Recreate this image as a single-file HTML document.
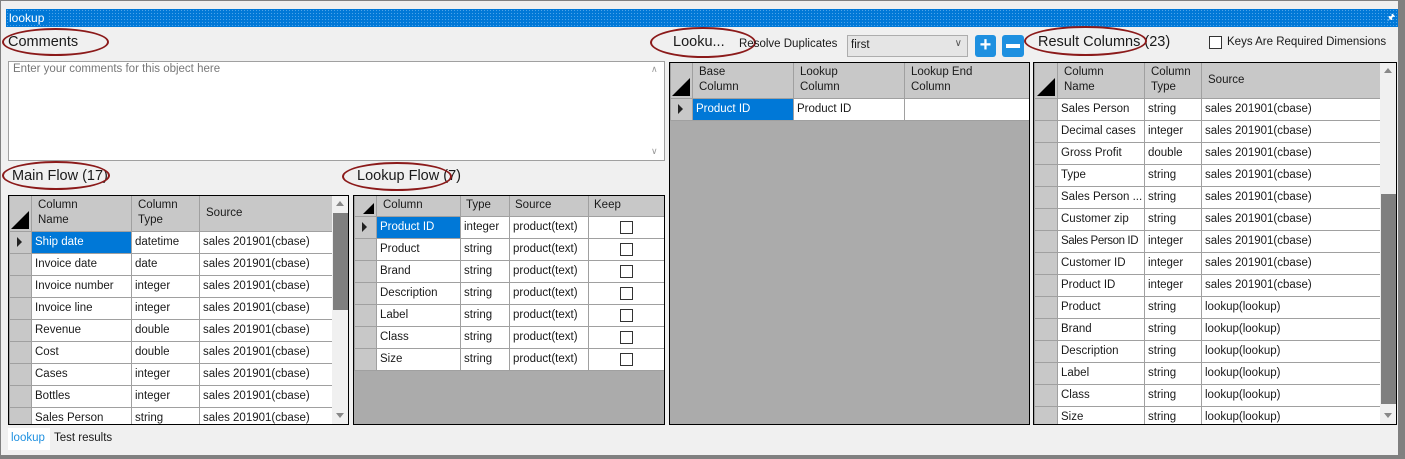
<!DOCTYPE html>
<html><head><meta charset="utf-8"><style>
*{box-sizing:border-box;margin:0;padding:0}
body{width:1405px;height:459px;background:#f0f0f0;font-family:"Liberation Sans",sans-serif;font-size:11.5px;color:#1a1a1a;position:relative;overflow:hidden}
.a{position:absolute}
.outer{left:0;top:0;width:1405px;height:459px;border:1px solid #808080;border-right:7px solid #808080;border-bottom:4px solid #808080}
.title{left:6px;top:9px;width:1392px;height:18px;background:#0078d7;color:#fff;font-size:12px;line-height:18px;padding-left:3px;background-image:radial-gradient(#4da3e8 0.6px,transparent 0.8px);background-size:3px 3px}
.title span{background:#0078d7;padding-right:4px}
.lbl{font-size:14.5px;color:#1a1a1a}
.ell{border:2px solid #8b1a1a;border-radius:50%}
.grid{border:1px solid #000;background:#ababab;overflow:hidden}
table{border-collapse:collapse;table-layout:fixed;position:absolute;left:0;top:0}
td{border:1px solid #a0a0a0;height:22px;padding:0 3px;background:#fff;white-space:nowrap;overflow:hidden;font-size:11.5px}
th{background:#c8c8c8;border:1px solid #a0a0a0;border-top:none;font-weight:normal;text-align:left;padding:0 6px;line-height:15px;font-size:11.5px;vertical-align:middle}
td.rh{background:#c8c8c8;padding:0}
th.corner{background:#c8c8c8;position:relative}
th.corner:after{content:"";position:absolute;right:2px;bottom:2px;border-style:solid;border-width:0 0 var(--c) var(--c);border-color:transparent transparent #000 transparent}
td.sel{background:#0078d7;color:#fff}
.arr{width:0;height:0;border-top:5px solid transparent;border-bottom:5px solid transparent;border-left:5px solid #222;margin-left:7px}
.sb{background:#f0f0f0}
.thumb{background:#7f7f7f}
.cb{display:inline-block;width:13px;height:13px;border:1px solid #333;background:#fff;vertical-align:middle}
</style></head><body>
<div class="a outer"></div>
<div class="a title"><span>lookup</span></div>
<div class="a" style="left:1387px;top:10px;color:#fff;font-size:9px">&#x1F588;</div>

<div class="a lbl" style="left:8px;top:34px">Comments</div>
<div class="a ell" style="left:2px;top:28px;width:107px;height:28px"></div>
<div class="a" style="left:8px;top:61px;width:657px;height:100px;background:#fff;border:1px solid #a0a0a0;color:#777;padding:1px 4px">Enter your comments for this object here</div>
<div class="a" style="left:651px;top:64px;color:#999;font-size:9px">&#x2227;</div>
<div class="a" style="left:651px;top:146px;color:#999;font-size:9px">&#x2228;</div>

<div class="a lbl" style="left:12px;top:168px">Main Flow (17)</div>
<div class="a ell" style="left:2px;top:161px;width:108px;height:29px"></div>
<div class="a lbl" style="left:357px;top:168px">Lookup Flow (7)</div>
<div class="a ell" style="left:342px;top:162px;width:110px;height:29px"></div>

<!-- Main grid -->
<div class="a grid" style="left:8px;top:195px;width:341px;height:230px;background:#fff">
<table style="width:323px"><colgroup><col style="width:22px"><col style="width:100px"><col style="width:68px"><col style="width:133px"></colgroup>
<tr style="height:35px"><th class="corner" style="--c:18px"></th><th>Column<br>Name</th><th>Column<br>Type</th><th>Source</th></tr>
<tr><td class="rh"><div class="arr"></div></td><td class="sel">Ship date</td><td>datetime</td><td>sales 201901(cbase)</td></tr>
<tr><td class="rh"></td><td>Invoice date</td><td>date</td><td>sales 201901(cbase)</td></tr>
<tr><td class="rh"></td><td>Invoice number</td><td>integer</td><td>sales 201901(cbase)</td></tr>
<tr><td class="rh"></td><td>Invoice line</td><td>integer</td><td>sales 201901(cbase)</td></tr>
<tr><td class="rh"></td><td>Revenue</td><td>double</td><td>sales 201901(cbase)</td></tr>
<tr><td class="rh"></td><td>Cost</td><td>double</td><td>sales 201901(cbase)</td></tr>
<tr><td class="rh"></td><td>Cases</td><td>integer</td><td>sales 201901(cbase)</td></tr>
<tr><td class="rh"></td><td>Bottles</td><td>integer</td><td>sales 201901(cbase)</td></tr>
<tr><td class="rh"></td><td>Sales Person</td><td>string</td><td>sales 201901(cbase)</td></tr>
</table>
<div class="a sb" style="left:323px;top:0;width:17px;height:228px"></div>
<div class="a thumb" style="left:324px;top:17px;width:15px;height:97px"></div>
<div class="a" style="left:327px;top:5px;border:4px solid transparent;border-bottom:5px solid #888;border-top:none"></div>
<div class="a" style="left:327px;top:217px;border:4px solid transparent;border-top:5px solid #888;border-bottom:none"></div>
</div>

<!-- Lookup flow grid -->
<div class="a grid" style="left:353px;top:195px;width:312px;height:230px">
<table style="width:310px"><colgroup><col style="width:22px"><col style="width:84px"><col style="width:49px"><col style="width:79px"><col style="width:76px"></colgroup>
<tr style="height:20px"><th class="corner" style="--c:11px"></th><th>Column</th><th style="padding-left:5px">Type</th><th style="padding-left:5px">Source</th><th style="padding-left:5px">Keep</th></tr>
<tr><td class="rh"><div class="arr"></div></td><td class="sel">Product ID</td><td>integer</td><td>product(text)</td><td style="text-align:center"><span class="cb"></span></td></tr>
<tr><td class="rh"></td><td>Product</td><td>string</td><td>product(text)</td><td style="text-align:center"><span class="cb"></span></td></tr>
<tr><td class="rh"></td><td>Brand</td><td>string</td><td>product(text)</td><td style="text-align:center"><span class="cb"></span></td></tr>
<tr><td class="rh"></td><td>Description</td><td>string</td><td>product(text)</td><td style="text-align:center"><span class="cb"></span></td></tr>
<tr><td class="rh"></td><td>Label</td><td>string</td><td>product(text)</td><td style="text-align:center"><span class="cb"></span></td></tr>
<tr><td class="rh"></td><td>Class</td><td>string</td><td>product(text)</td><td style="text-align:center"><span class="cb"></span></td></tr>
<tr><td class="rh"></td><td>Size</td><td>string</td><td>product(text)</td><td style="text-align:center"><span class="cb"></span></td></tr>
</table></div>

<!-- top controls -->
<div class="a lbl" style="left:673px;top:34px">Looku...</div>
<div class="a ell" style="left:650px;top:27px;width:106px;height:31px"></div>
<div class="a" style="left:739px;top:38px">Resolve Duplicates</div>
<div class="a" style="left:847px;top:35px;width:121px;height:22px;background:#e5e5e5;border:1px solid #adadad;padding:3px 3px">first<span style="position:absolute;right:5px;top:2px;color:#555;font-size:10px">&#x2228;</span></div>
<div class="a" style="left:975px;top:35px;width:21px;height:22px;background:#1e90e0;border-radius:3px;color:#fff;font-size:20px;font-weight:bold;text-align:center;line-height:21px">+</div>
<div class="a" style="left:1002px;top:35px;width:22px;height:22px;background:#1e90e0;border-radius:3px"><div class="a" style="left:4px;top:9px;width:14px;height:4px;background:#fff"></div></div>
<div class="a lbl" style="left:1038px;top:34px">Result Columns (23)</div>
<div class="a ell" style="left:1024px;top:26px;width:123px;height:30px"></div>
<div class="a" style="left:1209px;top:36px;width:13px;height:13px;border:1px solid #333;background:#fff"></div>
<div class="a" style="left:1227px;top:36px">Keys Are Required Dimensions</div>

<!-- Lookup keys grid -->
<div class="a grid" style="left:669px;top:62px;width:361px;height:363px">
<table style="width:359px"><colgroup><col style="width:22px"><col style="width:101px"><col style="width:111px"><col style="width:125px"></colgroup>
<tr style="height:35px"><th class="corner" style="--c:18px"></th><th>Base<br>Column</th><th>Lookup<br>Column</th><th>Lookup End<br>Column</th></tr>
<tr><td class="rh"><div class="arr"></div></td><td class="sel">Product ID</td><td>Product ID</td><td></td></tr>
</table></div>

<!-- Result grid -->
<div class="a grid" style="left:1033px;top:62px;width:364px;height:363px;background:#fff">
<table style="width:346px"><colgroup><col style="width:23px"><col style="width:87px"><col style="width:57px"><col style="width:179px"></colgroup>
<tr style="height:35px"><th class="corner" style="--c:18px"></th><th>Column<br>Name</th><th>Column<br>Type</th><th>Source</th></tr>
<tr><td class="rh"></td><td>Sales Person</td><td>string</td><td>sales 201901(cbase)</td></tr>
<tr><td class="rh"></td><td>Decimal cases</td><td>integer</td><td>sales 201901(cbase)</td></tr>
<tr><td class="rh"></td><td>Gross Profit</td><td>double</td><td>sales 201901(cbase)</td></tr>
<tr><td class="rh"></td><td>Type</td><td>string</td><td>sales 201901(cbase)</td></tr>
<tr><td class="rh"></td><td>Sales Person ...</td><td>string</td><td>sales 201901(cbase)</td></tr>
<tr><td class="rh"></td><td>Customer zip</td><td>string</td><td>sales 201901(cbase)</td></tr>
<tr><td class="rh"></td><td style="letter-spacing:-0.4px">Sales Person ID</td><td>integer</td><td>sales 201901(cbase)</td></tr>
<tr><td class="rh"></td><td>Customer ID</td><td>integer</td><td>sales 201901(cbase)</td></tr>
<tr><td class="rh"></td><td>Product ID</td><td>integer</td><td>sales 201901(cbase)</td></tr>
<tr><td class="rh"></td><td>Product</td><td>string</td><td>lookup(lookup)</td></tr>
<tr><td class="rh"></td><td>Brand</td><td>string</td><td>lookup(lookup)</td></tr>
<tr><td class="rh"></td><td>Description</td><td>string</td><td>lookup(lookup)</td></tr>
<tr><td class="rh"></td><td>Label</td><td>string</td><td>lookup(lookup)</td></tr>
<tr><td class="rh"></td><td>Class</td><td>string</td><td>lookup(lookup)</td></tr>
<tr><td class="rh"></td><td>Size</td><td>string</td><td>lookup(lookup)</td></tr>
</table>
<div class="a sb" style="left:346px;top:0;width:17px;height:361px"></div>
<div class="a thumb" style="left:347px;top:131px;width:15px;height:210px"></div>
<div class="a" style="left:350px;top:5px;border:4px solid transparent;border-bottom:5px solid #888;border-top:none"></div>
<div class="a" style="left:350px;top:350px;border:4px solid transparent;border-top:5px solid #888;border-bottom:none"></div>
</div>

<!-- tabs -->
<div class="a" style="left:8px;top:428px;width:42px;height:22px;background:#fff;color:#1e90e0;padding:4px 3px">lookup</div>
<div class="a" style="left:54px;top:432px">Test results</div>
</body></html>
